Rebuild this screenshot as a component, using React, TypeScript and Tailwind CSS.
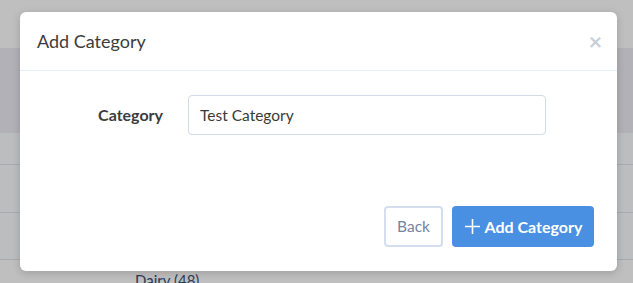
import React from "react";

function PlusIcon() {
  return (
    <svg width="17" height="17" viewBox="0 0 17 17" fill="none" stroke="currentColor" strokeWidth="1.6">
      <path d="M8.5 1v15M1 8.5h15" />
    </svg>
  );
}

export default function App() {
  return (
    <div
      className="relative h-[283px] w-[633px] overflow-hidden bg-white"
      style={{ fontFamily: "Lato, 'Open Sans', sans-serif" }}
    >
      {/* page under the backdrop */}
      <div className="flex flex-col">
        <div className="h-[48px] bg-white" />
        <div className="h-[85px] bg-[#ecedf4]" />
        <div className="h-[32px] border-b border-[#e2e3ea] bg-[#fbfcfe]" />
        <div className="h-[48px] border-b border-[#e2e3ea] bg-[#fbfcfe]" />
        <div className="h-[47px] border-b border-[#e2e3ea] bg-[#fbfcfe]" />
        <div className="h-[23px] bg-white pl-[135px] pt-[13px] text-[15px] leading-none text-[#3c4f73]">
          Dairy (48)
        </div>
      </div>

      {/* backdrop + modal */}
      <div className="absolute inset-0 bg-black/25 pl-[20px] pt-[12px]">
        <div className="flex h-[259px] w-[597px] flex-col rounded-[6px] bg-white shadow-[0_2px_8px_rgba(0,0,0,0.18)]">
          <div className="flex h-[59px] items-center justify-between border-b border-[#e8eef5] pl-[17px] pr-[15px]">
            <h2 className="text-[18px] font-normal text-[#3c3c3c]">Add Category</h2>
            <button className="text-[23px] font-bold leading-none text-[#c9ced7]">×</button>
          </div>

          <div className="flex flex-1 flex-col justify-between pb-[24px] pt-[24px]">
            <div className="flex items-center">
              <label className="w-[143px] text-right text-[16px] font-bold text-[#3c3c3c]">Category</label>
              <input
                className="ml-[25px] h-[40px] w-[358px] rounded-[4px] border border-[#d3dbe6] px-[11px] text-[15.5px] text-[#3a3a3a] outline-none"
                defaultValue="Test Category"
              />
            </div>

            <div className="flex justify-end gap-[9px] pr-[23px]">
              <button className="h-[41px] w-[59px] rounded-[4px] border-2 border-[#d4deec] text-[15.5px] text-[#7484a0]">
                Back
              </button>
              <button className="flex h-[41px] w-[142px] items-center justify-center gap-[4px] rounded-[4px] bg-[#4a90e2] text-[16px] font-bold text-white">
                <PlusIcon />
                Add Category
              </button>
            </div>
          </div>
        </div>
      </div>
    </div>
  );
}
